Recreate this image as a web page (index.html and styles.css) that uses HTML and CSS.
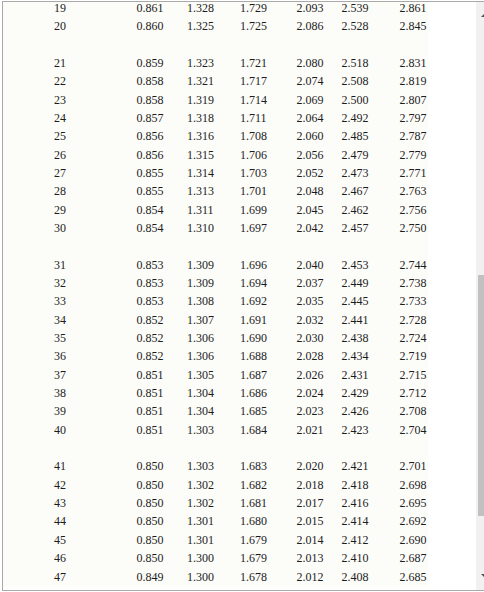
FILE: index.html
```html
<!DOCTYPE html>
<html>
<head>
<meta charset="utf-8">
<link rel="stylesheet" href="styles.css">
</head>
<body>
<div class="frame">
  <div class="viewport">
    <div class="ttable">
      <div class="row"><span>19</span><span>0.861</span><span>1.328</span><span>1.729</span><span>2.093</span><span>2.539</span><span>2.861</span></div>
      <div class="row"><span>20</span><span>0.860</span><span>1.325</span><span>1.725</span><span>2.086</span><span>2.528</span><span>2.845</span></div>
      <div class="gap"></div>
      <div class="row"><span>21</span><span>0.859</span><span>1.323</span><span>1.721</span><span>2.080</span><span>2.518</span><span>2.831</span></div>
      <div class="row"><span>22</span><span>0.858</span><span>1.321</span><span>1.717</span><span>2.074</span><span>2.508</span><span>2.819</span></div>
      <div class="row"><span>23</span><span>0.858</span><span>1.319</span><span>1.714</span><span>2.069</span><span>2.500</span><span>2.807</span></div>
      <div class="row"><span>24</span><span>0.857</span><span>1.318</span><span>1.711</span><span>2.064</span><span>2.492</span><span>2.797</span></div>
      <div class="row"><span>25</span><span>0.856</span><span>1.316</span><span>1.708</span><span>2.060</span><span>2.485</span><span>2.787</span></div>
      <div class="row"><span>26</span><span>0.856</span><span>1.315</span><span>1.706</span><span>2.056</span><span>2.479</span><span>2.779</span></div>
      <div class="row"><span>27</span><span>0.855</span><span>1.314</span><span>1.703</span><span>2.052</span><span>2.473</span><span>2.771</span></div>
      <div class="row"><span>28</span><span>0.855</span><span>1.313</span><span>1.701</span><span>2.048</span><span>2.467</span><span>2.763</span></div>
      <div class="row"><span>29</span><span>0.854</span><span>1.311</span><span>1.699</span><span>2.045</span><span>2.462</span><span>2.756</span></div>
      <div class="row"><span>30</span><span>0.854</span><span>1.310</span><span>1.697</span><span>2.042</span><span>2.457</span><span>2.750</span></div>
      <div class="gap"></div>
      <div class="row"><span>31</span><span>0.853</span><span>1.309</span><span>1.696</span><span>2.040</span><span>2.453</span><span>2.744</span></div>
      <div class="row"><span>32</span><span>0.853</span><span>1.309</span><span>1.694</span><span>2.037</span><span>2.449</span><span>2.738</span></div>
      <div class="row"><span>33</span><span>0.853</span><span>1.308</span><span>1.692</span><span>2.035</span><span>2.445</span><span>2.733</span></div>
      <div class="row"><span>34</span><span>0.852</span><span>1.307</span><span>1.691</span><span>2.032</span><span>2.441</span><span>2.728</span></div>
      <div class="row"><span>35</span><span>0.852</span><span>1.306</span><span>1.690</span><span>2.030</span><span>2.438</span><span>2.724</span></div>
      <div class="row"><span>36</span><span>0.852</span><span>1.306</span><span>1.688</span><span>2.028</span><span>2.434</span><span>2.719</span></div>
      <div class="row"><span>37</span><span>0.851</span><span>1.305</span><span>1.687</span><span>2.026</span><span>2.431</span><span>2.715</span></div>
      <div class="row"><span>38</span><span>0.851</span><span>1.304</span><span>1.686</span><span>2.024</span><span>2.429</span><span>2.712</span></div>
      <div class="row"><span>39</span><span>0.851</span><span>1.304</span><span>1.685</span><span>2.023</span><span>2.426</span><span>2.708</span></div>
      <div class="row"><span>40</span><span>0.851</span><span>1.303</span><span>1.684</span><span>2.021</span><span>2.423</span><span>2.704</span></div>
      <div class="gap"></div>
      <div class="row"><span>41</span><span>0.850</span><span>1.303</span><span>1.683</span><span>2.020</span><span>2.421</span><span>2.701</span></div>
      <div class="row"><span>42</span><span>0.850</span><span>1.302</span><span>1.682</span><span>2.018</span><span>2.418</span><span>2.698</span></div>
      <div class="row"><span>43</span><span>0.850</span><span>1.302</span><span>1.681</span><span>2.017</span><span>2.416</span><span>2.695</span></div>
      <div class="row"><span>44</span><span>0.850</span><span>1.301</span><span>1.680</span><span>2.015</span><span>2.414</span><span>2.692</span></div>
      <div class="row"><span>45</span><span>0.850</span><span>1.301</span><span>1.679</span><span>2.014</span><span>2.412</span><span>2.690</span></div>
      <div class="row"><span>46</span><span>0.850</span><span>1.300</span><span>1.679</span><span>2.013</span><span>2.410</span><span>2.687</span></div>
      <div class="row"><span>47</span><span>0.849</span><span>1.300</span><span>1.678</span><span>2.012</span><span>2.408</span><span>2.685</span></div>
    </div>
  </div>
  <div class="scrollbar">
    <div class="arrow-up"></div>
    <div class="thumb"></div>
    <div class="arrow-down"></div>
  </div>
</div>
</body>
</html>
```

FILE: styles.css
```css
html, body {
  margin: 0;
  padding: 0;
  background: #ffffff;
}

.frame {
  box-sizing: border-box;
  margin: 1px 0 0 2px;
  width: 482px;
  height: 590px;
  border: 1px solid #a9a9a9;
  border-right: none;
  display: flex;
  overflow: hidden;
  background: #ffffff;
}

.viewport {
  flex: 1;
  overflow: hidden;
}

.ttable {
  width: 425px;
  margin-top: -3.17px;
  background: #fcfcf9;
  font-family: "Liberation Serif", "Times New Roman", serif;
  font-size: 12px;
  color: #1c1c1c;
}

.row {
  display: grid;
  grid-template-columns: 82.5px 50.5px 53px 56.5px 45px 58px 28.5px;
  padding-left: 51px;
  height: 18.35px;
  line-height: 18.35px;
  white-space: nowrap;
}

.gap {
  height: 18.35px;
}

.scrollbar {
  width: 8px;
  flex: none;
  background: #f1f1f1;
  display: flex;
  flex-direction: column;
  overflow: hidden;
}

.arrow-up {
  width: 0;
  height: 0;
  margin: 11px 0 0 5px;
  border-left: 4px solid transparent;
  border-right: 4px solid transparent;
  border-bottom: 4px solid #505050;
  flex: none;
}

.thumb {
  margin: 258px 0 0 2px;
  width: 10px;
  height: 241px;
  background: #c1c1c1;
  flex: none;
}

.arrow-down {
  width: 0;
  height: 0;
  margin: 58px 0 0 5px;
  border-left: 4px solid transparent;
  border-right: 4px solid transparent;
  border-top: 4px solid #505050;
  flex: none;
}
```
